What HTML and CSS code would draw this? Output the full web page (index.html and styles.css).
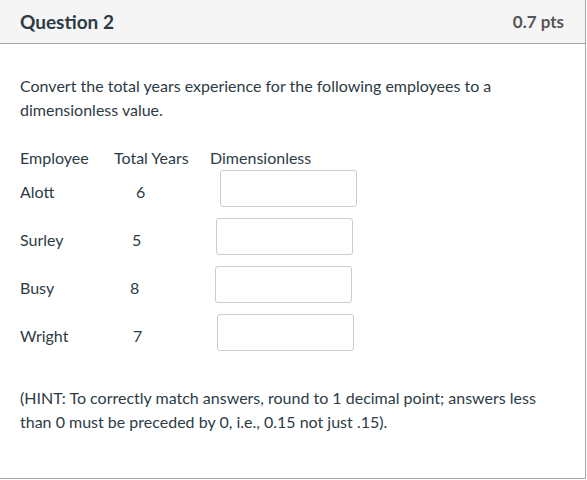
FILE: index.html
```html
<!DOCTYPE html>
<html lang="en">

<head>
    <meta charset="UTF-8">
    <meta name="viewport" content="width=device-width, initial-scale=1.0">
    <title>Question 2</title>

    <link rel="stylesheet" href="styles.css">
</head>

<body>
    <div class="spoergsmaal">
        <header class="hoved">
            <h2>Question 2</h2>
            <span class="point">0.7 pts</span>
        </header>

        <div class="indhold">
            <p class="tekst">Convert the total years experience for the following employees to a dimensionless value.</p>

            <div class="tabel">
                <div class="overskrift">
                    <span>Employee</span>
                    <span>Total Years</span>
                    <span>Dimensionless</span>
                </div>
                <div class="raekke">
                    <span>Alott</span>
                    <span class="tal tal-1">6</span>
                    <input type="text" class="svar svar-1">
                </div>
                <div class="raekke">
                    <span>Surley</span>
                    <span class="tal tal-2">5</span>
                    <input type="text" class="svar svar-2">
                </div>
                <div class="raekke">
                    <span>Busy</span>
                    <span class="tal tal-3">8</span>
                    <input type="text" class="svar svar-3">
                </div>
                <div class="raekke">
                    <span>Wright</span>
                    <span class="tal tal-4">7</span>
                    <input type="text" class="svar svar-4">
                </div>
            </div>

            <p class="tekst hint">(HINT: To correctly match answers, round to 1 decimal point; answers less than 0 must be preceded by 0, i.e., 0.15 not just .15).</p>
        </div>
    </div>
</body>

</html>
```
FILE: styles.css
```css
body {
    margin: 0;
    font-family: Lato, "Liberation Sans", sans-serif;
    color: #2d3b45;
}

.spoergsmaal {
    width: 585px;
    height: 478px;
    border-right: 1px solid #a5a5a5;
    border-bottom: 1px solid #a5a5a5;
    background-color: white;
    display: flex;
    flex-direction: column;
}

.hoved {
    height: 43px;
    border-bottom: 1px solid #a5a5a5;
    background-color: #f5f5f5;
    display: flex;
    align-items: center;
    justify-content: space-between;
    padding: 0 21px 0 20px;
}

.hoved h2 {
    margin: 0;
    font-size: 19px;
    font-weight: bold;
}

.point {
    font-size: 17px;
    font-weight: bold;
    color: #555;
}

.indhold {
    padding: 30px 20px 0 20px;
}

.tekst {
    margin: 0;
    font-size: 16px;
    line-height: 24px;
}

.tabel {
    margin-top: 24px;
    font-size: 16px;
    line-height: 24px;
}

.overskrift {
    display: flex;
}

.overskrift span:nth-child(1) {
    width: 94px;
}

.overskrift span:nth-child(2) {
    width: 96px;
}

.raekke {
    display: flex;
    align-items: flex-end;
    height: 37px;
    margin-top: 11px;
}

.overskrift + .raekke {
    margin-top: 0;
}

.raekke span {
    padding-bottom: 3px;
}

.raekke span:first-child {
    width: 94px;
}

.tal {
    width: 106px;
    padding-left: 22px;
    box-sizing: border-box;
}

.tal-2 {
    padding-left: 18px;
}

.tal-3 {
    padding-left: 16px;
}

.tal-4 {
    padding-left: 19px;
}

.svar {
    width: 137px;
    height: 37px;
    box-sizing: border-box;
    border: 1px solid #c7cdd1;
    border-radius: 3px;
    margin: 0;
    padding: 0 8px;
    align-self: flex-start;
}

.svar-2 {
    margin-left: -4px;
}

.svar-3 {
    margin-left: -5px;
}

.svar-4 {
    margin-left: -3px;
}

.hint {
    margin-top: 35px;
}
```
